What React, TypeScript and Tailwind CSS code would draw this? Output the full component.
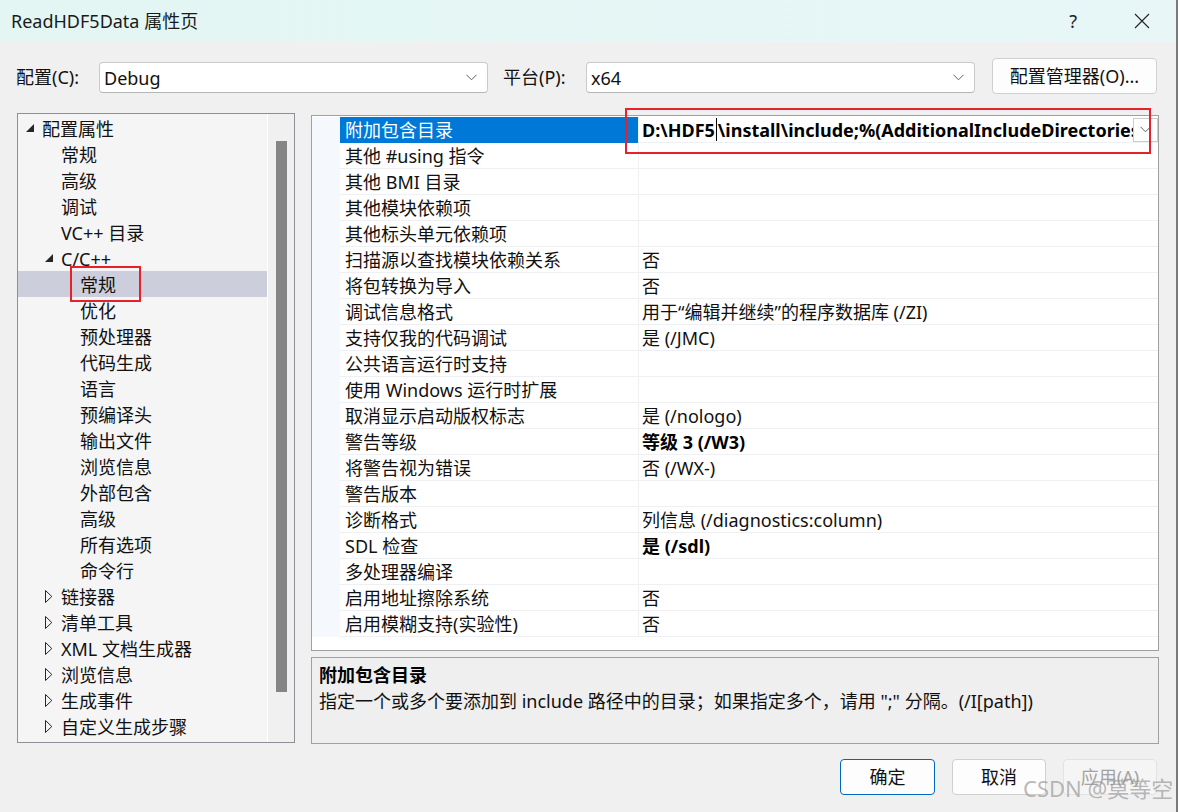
import React from "react";

const FONT = '"Noto Sans", "Noto Sans CJK SC", sans-serif';

type TreeItem = { t: string; l: 0 | 1 | 2; exp?: "open" | "closed"; sel?: boolean };

const tree: TreeItem[] = [
  { t: "配置属性", l: 0, exp: "open" },
  { t: "常规", l: 1 },
  { t: "高级", l: 1 },
  { t: "调试", l: 1 },
  { t: "VC++ 目录", l: 1 },
  { t: "C/C++", l: 1, exp: "open" },
  { t: "常规", l: 2, sel: true },
  { t: "优化", l: 2 },
  { t: "预处理器", l: 2 },
  { t: "代码生成", l: 2 },
  { t: "语言", l: 2 },
  { t: "预编译头", l: 2 },
  { t: "输出文件", l: 2 },
  { t: "浏览信息", l: 2 },
  { t: "外部包含", l: 2 },
  { t: "高级", l: 2 },
  { t: "所有选项", l: 2 },
  { t: "命令行", l: 2 },
  { t: "链接器", l: 1, exp: "closed" },
  { t: "清单工具", l: 1, exp: "closed" },
  { t: "XML 文档生成器", l: 1, exp: "closed" },
  { t: "浏览信息", l: 1, exp: "closed" },
  { t: "生成事件", l: 1, exp: "closed" },
  { t: "自定义生成步骤", l: 1, exp: "closed" },
];

const indent = ["pl-[8px]", "pl-[27px]", "pl-[46px]"];

const props: { name: string; value: string; bold?: boolean }[] = [
  { name: "附加包含目录", value: "" },
  { name: "其他 #using 指令", value: "" },
  { name: "其他 BMI 目录", value: "" },
  { name: "其他模块依赖项", value: "" },
  { name: "其他标头单元依赖项", value: "" },
  { name: "扫描源以查找模块依赖关系", value: "否" },
  { name: "将包转换为导入", value: "否" },
  { name: "调试信息格式", value: "用于“编辑并继续”的程序数据库 (/ZI)" },
  { name: "支持仅我的代码调试", value: "是 (/JMC)" },
  { name: "公共语言运行时支持", value: "" },
  { name: "使用 Windows 运行时扩展", value: "" },
  { name: "取消显示启动版权标志", value: "是 (/nologo)" },
  { name: "警告等级", value: "等级 3 (/W3)", bold: true },
  { name: "将警告视为错误", value: "否 (/WX-)" },
  { name: "警告版本", value: "" },
  { name: "诊断格式", value: "列信息 (/diagnostics:column)" },
  { name: "SDL 检查", value: "是 (/sdl)", bold: true },
  { name: "多处理器编译", value: "" },
  { name: "启用地址擦除系统", value: "否" },
  { name: "启用模糊支持(实验性)", value: "否" },
];

function Chevron({ className = "" }: { className?: string }) {
  return (
    <svg width="11" height="7" viewBox="0 0 11 7" className={className}>
      <path d="M0.5 0.8 L5.5 5.8 L10.5 0.8" fill="none" stroke="#5f5f5f" strokeWidth="1" />
    </svg>
  );
}

function Expander({ exp }: { exp?: "open" | "closed" }) {
  if (exp === "open") {
    return (
      <svg width="8" height="8" viewBox="0 0 8 8">
        <polygon points="8,0 8,8 0,8" fill="#262626" />
      </svg>
    );
  }
  if (exp === "closed") {
    return (
      <svg width="8" height="13" viewBox="0 0 8 13">
        <polygon points="0.5,0.5 6.8,6.5 0.5,12.5" fill="none" stroke="#262626" strokeWidth="1" />
      </svg>
    );
  }
  return null;
}

function Combo({ value }: { value: string }) {
  return (
    <div className="w-[389px] h-[31px] mt-[4px] bg-white border border-[#cacaca] border-b-[#b5b5b5] rounded-[4px] flex items-center justify-between pl-[4px] pr-[10px]">
      <span className="text-[18px] leading-[26px] text-[#111]">{value}</span>
      <Chevron />
    </div>
  );
}

export default function App() {
  return (
    <div
      className="w-[1178px] h-[812px] bg-[#f0f0f0] flex overflow-hidden relative text-[#111]"
      style={{ fontFamily: FONT }}
    >
      <div className="w-[1176px] flex flex-col">
        {/* title bar */}
        <div className="h-[42px] shrink-0 bg-gradient-to-r from-[#e3f6f3] to-[#e8f6f8] flex items-center justify-between">
          <span className="pl-[11px] text-[18px] leading-[26px] text-[#1a1a1a]">ReadHDF5Data 属性页</span>
          <div className="flex items-center pr-[26px]">
            <span className="text-[18px] leading-[26px] text-[#222]">?</span>
            <svg width="16" height="16" viewBox="0 0 16 16" className="ml-[57px]">
              <path d="M1 1 L15 15 M15 1 L1 15" stroke="#222" strokeWidth="1.1" fill="none" />
            </svg>
          </div>
        </div>

        {/* configuration / platform row */}
        <div className="h-[36px] mt-[16px] flex items-start pl-[16px] shrink-0">
          <span className="w-[83px] mt-[6px] text-[18px] leading-[26px]">配置(C):</span>
          <Combo value="Debug" />
          <span className="w-[83px] ml-[15px] mt-[6px] text-[18px] leading-[26px]">平台(P):</span>
          <Combo value="x64" />
          <button className="ml-[17px] w-[165px] h-[36px] bg-[#fdfdfd] border border-[#d0d0d0] rounded-[4px] text-[18px] leading-[26px] text-[#111]">
            配置管理器(O)...
          </button>
        </div>

        {/* main area */}
        <div className="flex mt-[19px] pl-[17px] gap-[16px]">
          {/* tree */}
          <div className="w-[278px] h-[630px] border border-[#8e9095] bg-[#f5f5f5] flex">
            <div className="flex-1 pt-[1px] border-r border-white">
              {tree.map((it, i) => (
                <div
                  key={i}
                  className={`relative h-[26px] flex items-center ${indent[it.l]} ${it.sel ? "bg-[#cccedb]" : ""}`}
                >
                  <div className="w-[16px] flex items-center">
                    <Expander exp={it.exp} />
                  </div>
                  <span className="relative top-[1px] text-[18px] leading-[26px] whitespace-nowrap text-[#111]">
                    {it.t}
                  </span>
                  {it.sel && (
                    <div className="absolute left-[52px] top-[-5px] w-[71px] h-[36px] border-2 border-[#e8202c] z-10" />
                  )}
                </div>
              ))}
            </div>
            <div className="w-[26px] bg-[#f0f0f0] pt-[27px] pb-[50px] flex justify-center">
              <div className="w-[11px] bg-[#858585]" />
            </div>
          </div>

          {/* right column */}
          <div className="mt-[2px] flex flex-col gap-[6px]">
            {/* property grid */}
            <div className="w-[848px] h-[536px] border border-[#a0a0a0] bg-white pt-[1px]">
              {props.map((p, i) => (
                <div key={i} className="relative h-[26px] flex">
                  <div className="w-[28px] bg-[#f5f8fc]" />
                  <div
                    className={`w-[298px] pl-[5px] flex items-center border-b ${
                      i === 0 ? "bg-[#0078d7] text-white border-[#0078d7]" : "border-[#eef0f4]"
                    }`}
                  >
                    <span className="relative top-[1px] text-[18px] leading-[25px] whitespace-nowrap">{p.name}</span>
                  </div>
                  <div className="w-[1px] bg-[#eef0f4]" />
                  <div className="flex-1 flex items-center border-b border-[#eef0f4] pl-[3px] overflow-hidden">
                    {i === 0 ? (
                      <div className="flex items-center w-full h-full">
                        <div className="flex-1 overflow-hidden whitespace-nowrap flex items-center">
                          <span className="relative top-[1px] text-[18px] leading-[25px] font-bold text-black">
                            D:\HDF5
                          </span>
                          <span className="inline-block shrink-0 w-[1px] h-[23px] mx-[1px] bg-black" />
                          <span className="relative top-[1px] text-[18px] leading-[25px] font-bold text-black">
                            \install\include;%(AdditionalIncludeDirectories)
                          </span>
                        </div>
                        <div className="w-[25px] h-[24px] bg-white border border-[#cccccc] flex items-center justify-center shrink-0">
                          <Chevron />
                        </div>
                      </div>
                    ) : (
                      <span
                        className={`relative top-[1px] text-[18px] leading-[25px] whitespace-nowrap ${
                          p.bold ? "font-bold text-black" : ""
                        }`}
                      >
                        {p.value}
                      </span>
                    )}
                  </div>
                  {i === 0 && (
                    <div className="absolute left-[313px] top-[-9px] w-[526px] h-[46px] border-2 border-[#e8202c] z-10" />
                  )}
                </div>
              ))}
            </div>

            {/* description */}
            <div className="w-[848px] h-[87px] border border-[#a0a0a0] bg-[#efefef] pl-[7px] pt-[4px]">
              <div className="text-[18px] leading-[26px] font-bold text-black">附加包含目录</div>
              <div className="text-[18px] leading-[26px] whitespace-nowrap">
                指定一个或多个要添加到 include 路径中的目录；如果指定多个，请用 ";" 分隔。(/I[path])
              </div>
            </div>
          </div>
        </div>

        {/* dialog buttons */}
        <div className="flex justify-end pr-[19px] mt-[15px] gap-[17px]">
          <button className="w-[95px] h-[36px] bg-[#fdfdfd] border border-[#0067c0] rounded-[4px] text-[18px] leading-[26px] text-[#111]">
            确定
          </button>
          <button className="w-[94px] h-[36px] bg-[#fdfdfd] border border-[#d0d0d0] rounded-[4px] text-[18px] leading-[26px] text-[#111]">
            取消
          </button>
          <button className="w-[94px] h-[36px] bg-[#f5f5f5] border border-[#e3e3e3] rounded-[4px] text-[18px] leading-[26px] text-[#a3a3a3]">
            应用(A)
          </button>
        </div>
      </div>
      <div className="w-[2px] bg-[#7a7a7a]" />

      {/* author watermark */}
      <div className="absolute left-[1023px] top-[773px] text-[22px] leading-[30px] text-[#9a9a9a]/70 whitespace-nowrap pointer-events-none">
        CSDN @莫等空
      </div>
    </div>
  );
}
